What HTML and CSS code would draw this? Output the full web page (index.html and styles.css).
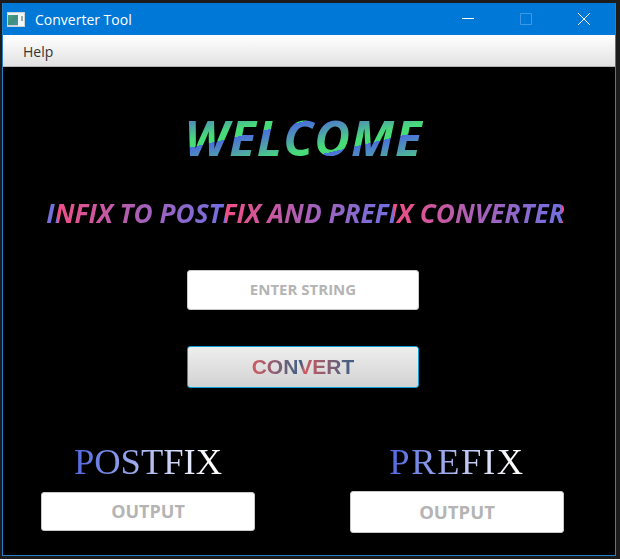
FILE: index.html
```html
<!DOCTYPE html>
<html lang="en">
<head>
<meta charset="utf-8">
<title>Converter Tool</title>
<link rel="stylesheet" href="styles.css">
</head>
<body>
<div class="window">
  <header class="titlebar">
    <svg class="app-icon" width="18" height="15" viewBox="0 0 18 15"><defs><linearGradient id="ic" x1="0" y1="0" x2="1" y2="1"><stop offset="0" stop-color="#4f9f8f"/><stop offset=".5" stop-color="#3f8f7a"/><stop offset="1" stop-color="#4a8fb0"/></linearGradient></defs><rect width="18" height="15" fill="#c9d3d8"/><rect x="1" y="1" width="16" height="2" fill="#eef3f5"/><rect x="1" y="3" width="10" height="10" fill="url(#ic)"/><rect x="11" y="3" width="6" height="11" fill="#f4f7f8"/><rect x="14" y="4" width="2" height="5" fill="#8fb0b0"/></svg>
    <span class="title">Converter Tool</span>
    <div class="controls">
      <span class="ctl"><svg width="12" height="12" viewBox="0 0 12 12"><path d="M0 5.5H12" stroke="#fff" fill="none"/></svg></span>
      <span class="ctl"><svg width="12" height="12" viewBox="0 0 12 12"><path d="M.5.5H11.5V11.5H.5Z" stroke="#3f9ae6" fill="none"/></svg></span>
      <span class="ctl"><svg width="12" height="12" viewBox="0 0 12 12"><path d="M0 0L12 12M12 0L0 12" stroke="#fff" fill="none"/></svg></span>
    </div>
  </header>
  <nav class="menubar"><span class="menu-item">Help</span></nav>
  <main class="content">
    <h1 class="welcome">WELCOME</h1>
    <h2 class="subtitle">INFIX TO POSTFIX AND PREFIX CONVERTER</h2>
    <div class="field entry">ENTER STRING</div>
    <button class="convert" type="button"><span>CONVERT</span></button>
    <div class="outputs">
      <section class="out out-post">
        <h3 class="out-title">POSTFIX</h3>
        <div class="field output">OUTPUT</div>
      </section>
      <section class="out out-pre">
        <h3 class="out-title">PREFIX</h3>
        <div class="field output tall">OUTPUT</div>
      </section>
    </div>
  </main>
</div>
</body>
</html>
```
FILE: styles.css
```css
* { box-sizing: border-box; }
html, body { margin: 0; height: 559px; overflow: hidden; background: #1c1c1c; }
body { padding: 3px 0 0 2px; font-family: "Open Sans", "Liberation Sans", sans-serif; }
.window { width: 614px; height: 553px; display: flex; flex-direction: column; border: 1px solid #2b7fc4; border-top: 0; background: #000; }
.titlebar { height: 32px; flex: none; display: flex; align-items: center; background: #0078d7; color: #fff; padding-left: 4px; }
.app-icon { flex: none; }
.title { margin-left: 10px; font-size: 14px; }
.controls { margin-left: auto; display: flex; padding-right: 2px; }
.ctl { width: 58px; height: 32px; display: flex; align-items: center; justify-content: center; }
.menubar { height: 32px; flex: none; display: flex; align-items: center; padding: 1px 0 0 20px; background: linear-gradient(#fff, #e2e2e2); border-bottom: 1px solid #b5b5b5; font-size: 14px; color: #333; }
.content { flex: 1; display: flex; flex-direction: column; align-items: center; padding: 44px 12px 0 0; }
.welcome { margin: 0 0 0 1px; font-size: 49px; line-height: 52px; font-style: italic; font-weight: 700; letter-spacing: 1px; color: transparent; background: repeating-linear-gradient(167deg, #4b6fdc 1px, #4f9ab0 15px, #48dc78 30px, #48dc78 37px); -webkit-background-clip: text; background-clip: text; }
.subtitle { margin: 34px 0 0 5px; font-size: 26.25px; line-height: 32px; font-style: italic; font-weight: 700; white-space: nowrap; color: transparent; background: repeating-linear-gradient(90deg, #ef4f86 11px, #a860b8 95px, #7070e0 179.5px); -webkit-background-clip: text; background-clip: text; }
.field { background: #fff; border: 1px solid #c8c8c8; border-radius: 3px; display: flex; align-items: center; justify-content: center; padding-bottom: 2px; font-weight: 700; color: #b4b4b4; }
.entry { width: 232px; height: 40px; margin-top: 41px; font-size: 15px; }
.convert { width: 232px; height: 42px; margin-top: 36px; padding: 0; border: 1px solid #0a9fd4; border-radius: 3px; background: linear-gradient(#eee, #d2d2d2); font-family: "Liberation Sans", sans-serif; font-size: 21px; font-weight: 700; }
.convert span { color: transparent; background: linear-gradient(90deg, #d05a60 0, #3a6285 49%, #d05a60 50%, #3a6285 100%); -webkit-background-clip: text; background-clip: text; }
.outputs { width: 100%; display: flex; margin-top: 54px; }
.out { display: flex; flex-direction: column; align-items: center; width: 214px; }
.out-post { margin-left: 38px; }
.out-pre { margin-left: 95px; }
.out-title { margin: 0 0 10px; font-family: "Liberation Serif", serif; font-size: 36.5px; line-height: 40px; font-weight: 400; color: transparent; background: linear-gradient(90deg, #4f66e0, #fff 92%); -webkit-background-clip: text; background-clip: text; }
.out-pre .out-title { margin-bottom: 9px; letter-spacing: 1.6px; }
.output { width: 214px; height: 39px; font-size: 18px; }
.tall { height: 42px; font-size: 18.5px; }
```
